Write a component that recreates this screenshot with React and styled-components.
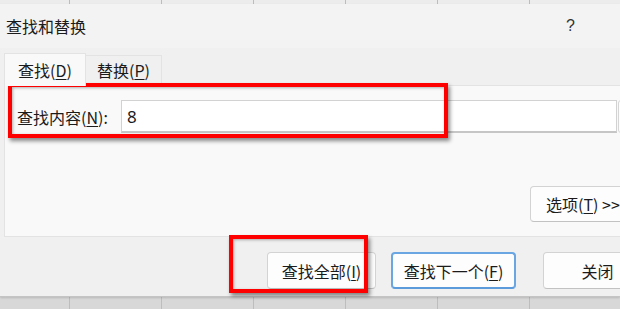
import styled, { createGlobalStyle } from "styled-components";

const GlobalStyle = createGlobalStyle`
  html, body {
    margin: 0;
    padding: 0;
    background: #f0f0f0;
  }
  * {
    box-sizing: border-box;
  }
`;

const columns = [70, 92, 92, 92, 92, 92, 92];

const App = () => {
  return (
    <>
      <GlobalStyle />
      <Page>
        <SheetStrip height={4} tone="#ececec">
          {columns.map((w, i) => (
            <SheetCell key={i} style={{ width: w }} />
          ))}
        </SheetStrip>

        <Dialog>
          <TitleBar>
            <Title>查找和替换</Title>
            <Help>?</Help>
          </TitleBar>

          <Content>
            <TabRow>
              <Tab active width={82}>
                查找(<u>D</u>)
              </Tab>
              <Tab width={76}>
                替换(<u>P</u>)
              </Tab>
            </TabRow>

            <Panel>
              <FieldRow>
                <Label>
                  查找内容(<u>N</u>):
                </Label>
                <InputBox>8</InputBox>
                <DropButton />
              </FieldRow>

              <OptionsRow>
                <Button width={120} align="left">
                  选项(<u>T</u>) &gt;&gt;
                </Button>
              </OptionsRow>
            </Panel>

            <ButtonRow>
              <Button width={109}>
                查找全部(<u>I</u>)
              </Button>
              <Button width={125} primary gap={15}>
                查找下一个(<u>F</u>)
              </Button>
              <Button width={109} gap={27}>
                关闭
              </Button>
            </ButtonRow>
          </Content>

          <Highlight top={79} left={8} width={440} height={55} />
          <Highlight top={231} left={229} width={139} height={58} />
        </Dialog>

        <SheetStrip height={12} tone="#d8d8d8">
          {columns.map((w, i) => (
            <SheetCell key={i} style={{ width: w }} />
          ))}
        </SheetStrip>
      </Page>
    </>
  );
};

export default App;

const Page = styled.div`
  width: 620px;
  height: 309px;
  overflow: hidden;
  display: flex;
  flex-direction: column;
  font-family: "Noto Sans CJK SC", "Noto Sans", sans-serif;
  color: #1b1b1b;
  background: #f0f0f0;
`;

const SheetStrip = styled.div`
  height: ${(props) => props.height}px;
  flex: none;
  display: flex;
  background: ${(props) => props.tone};
`;

const SheetCell = styled.div`
  flex: none;
  height: 100%;
  border-right: 1px solid #bdbdbd;
`;

const Dialog = styled.div`
  position: relative;
  flex: none;
  height: 293px;
  display: flex;
  flex-direction: column;
  background: #f0f0f0;
  border-bottom: 1px solid #c4c4c4;
  box-shadow: 0 1px 2px rgba(0, 0, 0, 0.15);
`;

const TitleBar = styled.div`
  height: 44px;
  flex: none;
  display: flex;
  align-items: center;
  justify-content: space-between;
  padding: 0 45px 0 6px;
  background: #f3f3f3;
`;

const Title = styled.div`
  font-size: 16px;
  line-height: 20px;
  white-space: nowrap;
`;

const Help = styled.div`
  font-size: 16px;
  line-height: 20px;
  font-family: "Liberation Sans", sans-serif;
  color: #333;
`;

const Content = styled.div`
  display: flex;
  flex-direction: column;
  padding: 5px 0 0 4px;
`;

const TabRow = styled.div`
  display: flex;
  align-items: flex-end;
  height: 32px;
`;

const Tab = styled.div`
  width: ${(props) => props.width}px;
  height: ${(props) => (props.active ? 33 : 30)}px;
  margin-bottom: ${(props) => (props.active ? -1 : 0)}px;
  position: relative;
  z-index: ${(props) => (props.active ? 1 : 0)};
  display: flex;
  align-items: center;
  justify-content: center;
  font-size: 16px;
  white-space: nowrap;
  background: ${(props) => (props.active ? "#f9f9f9" : "#f0f0f0")};
  border: 1px solid #e3e3e3;
  border-bottom: ${(props) => (props.active ? "none" : "1px solid #e3e3e3")};
  border-left: ${(props) => (props.active ? "1px solid #e3e3e3" : "none")};

  & > u {
    text-underline-offset: 2px;
  }
`;

const Panel = styled.div`
  width: 660px;
  height: 152px;
  flex: none;
  display: flex;
  flex-direction: column;
  padding: 14px 0 0 12px;
  background: #f9f9f9;
  border: 1px solid #e3e3e3;
`;

const FieldRow = styled.div`
  display: flex;
  align-items: center;
`;

const Label = styled.div`
  width: 104px;
  flex: none;
  font-size: 16px;
  white-space: nowrap;

  & > u {
    text-underline-offset: 2px;
  }
`;

const InputBox = styled.div`
  width: 496px;
  height: 33px;
  flex: none;
  display: flex;
  align-items: center;
  padding-left: 5px;
  background: #ffffff;
  border: 1px solid #d2d2d2;
  border-bottom: 2px solid #c6c6c6;
  font-family: "Noto Sans", sans-serif;
  font-size: 17px;
`;

const DropButton = styled.div`
  width: 30px;
  height: 33px;
  flex: none;
  margin-left: 1px;
  background: #fdfdfd;
  border: 1px solid #d6d6d6;
  border-radius: 3px;
`;

const OptionsRow = styled.div`
  display: flex;
  margin-top: 53px;
  padding-left: 513px;
`;

const Button = styled.div`
  width: ${(props) => props.width}px;
  height: ${(props) => (props.align === "left" ? 36 : 37)}px;
  flex: none;
  margin-left: ${(props) => props.gap || 0}px;
  display: flex;
  align-items: center;
  justify-content: ${(props) => (props.align === "left" ? "flex-start" : "center")};
  padding-left: ${(props) => (props.align === "left" ? 15 : 0)}px;
  font-size: 16px;
  background: #fdfdfd;
  border: ${(props) => (props.primary ? "2px solid #6aa6e2" : "1px solid #d3d3d3")};
  border-bottom-color: ${(props) => (props.primary ? "#5b9bdc" : "#c2c2c2")};
  border-radius: 4px;
  white-space: nowrap;

  & > u {
    text-underline-offset: 2px;
  }
`;

const ButtonRow = styled.div`
  display: flex;
  margin-top: 15px;
  padding-left: 263px;
`;

const Highlight = styled.div`
  position: absolute;
  top: ${(props) => props.top}px;
  left: ${(props) => props.left}px;
  width: ${(props) => props.width}px;
  height: ${(props) => props.height}px;
  border: 4px solid #ff0000;
  box-shadow: 2px 3px 4px rgba(0, 0, 0, 0.45), inset 1px 1px 3px rgba(0, 0, 0, 0.3);
  pointer-events: none;
`;
